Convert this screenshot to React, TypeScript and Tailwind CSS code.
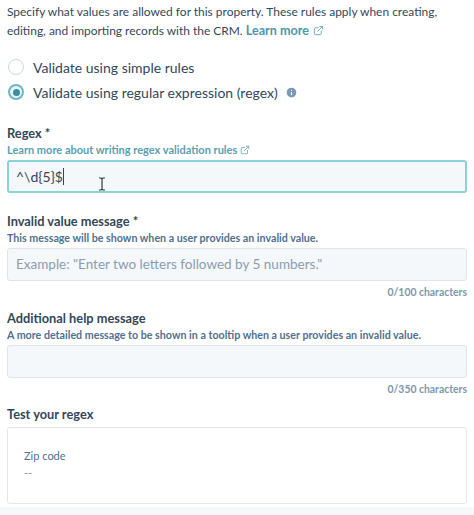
import { ExternalLink, Info } from "lucide-react";

const font = "font-['Lato',sans-serif]";

function FieldLabel({ text }: { text: string }) {
  return <div className="h-[20px] text-[12.8px] leading-[20px] font-bold text-[#33475b]">{text}</div>;
}

function HelpText({ text }: { text: string }) {
  return <div className="h-[16px] mt-[-1px] text-[10.7px] leading-[16px] font-bold text-[#516f90]">{text}</div>;
}

function Counter({ text }: { text: string }) {
  return <div className="mt-[3px] h-[16px] text-right text-[10.4px] leading-[16px] font-bold text-[#8296aa]">{text}</div>;
}

export default function App() {
  return (
    <div className={`${font} w-[474px] h-[515px] overflow-hidden bg-white px-[7px] text-[#33475b]`}>
      {/* Intro */}
      <div className="pt-[2px] text-[11.96px] leading-[19px] text-[#33475b] whitespace-nowrap">
        <p>Specify what values are allowed for this property. These rules apply when creating,</p>
        <p>
          editing, and importing records with the CRM.{" "}
          <span className="text-[12.6px] font-bold text-[#4f97a8]">Learn more</span>
          <ExternalLink className="inline ml-[4px] mb-[2px] w-[11px] h-[11px] text-[#6aa5b5]" />
        </p>
      </div>

      {/* Radios */}
      <div className="mt-[19px] flex flex-col gap-[9px] pl-[1px]">
        <label className="flex items-center h-[16px] gap-[9px] text-[14px]">
          <span className="w-[16px] h-[16px] rounded-full border border-[#cbd6e2] bg-white" />
          <span>Validate using simple rules</span>
        </label>
        <label className="flex items-center h-[16px] gap-[9px] text-[14px]">
          <span className="w-[16px] h-[16px] rounded-full border-2 border-[#6fb6c6] bg-[#e5f5f8] flex items-center justify-center">
            <span className="w-[7px] h-[7px] rounded-full bg-[#3f8ba0]" />
          </span>
          <span>Validate using regular expression (regex)</span>
          <Info className="ml-[-2px] w-[13px] h-[13px] fill-[#7c98b6] text-white" />
        </label>
      </div>

      {/* Regex */}
      <div className="mt-[23px]">
        <FieldLabel text="Regex *" />
        <div className="flex items-center h-[16px] mt-[-1px] text-[11px] leading-[16px] font-bold text-[#5a9fb0]">
          Learn more about writing regex validation rules
          <ExternalLink className="ml-[3px] w-[10px] h-[10px] text-[#6aa5b5]" />
        </div>
        <div className="relative mt-[2px] flex items-center h-[33px] rounded-[3px] border-2 border-[#86d3d8] bg-[#f5f8fa] pl-[7px] text-[14px] text-[#33475b]">
          ^\d{"{5}"}$<span className="w-px h-[17px] bg-[#33475b]" />
          {/* text cursor */}
          <svg className="absolute left-[89px] top-[15px]" width="8" height="14" viewBox="0 0 8 14" fill="none" stroke="#2d3e50" strokeWidth="1.2">
            <path d="M1 1h2l1 1 1-1h2M4 2v10M1 13h2l1-1 1 1h2" />
          </svg>
        </div>
      </div>

      {/* Invalid value message */}
      <div className="mt-[18px]">
        <FieldLabel text="Invalid value message *" />
        <HelpText text="This message will be shown when a user provides an invalid value." />
        <div className="mt-[2px] flex items-center h-[33px] rounded-[3px] border border-[#dfe3eb] bg-[#f5f8fa] pl-[8px] text-[13.5px] text-[#8b9cad]">
          Example: "Enter two letters followed by 5 numbers."
        </div>
        <Counter text="0/100 characters" />
      </div>

      {/* Additional help */}
      <div className="mt-[8px]">
        <FieldLabel text="Additional help message" />
        <HelpText text="A more detailed message to be shown in a tooltip when a user provides an invalid value." />
        <div className="mt-[2px] h-[33px] rounded-[3px] border border-[#dfe3eb] bg-[#f5f8fa]" />
        <Counter text="0/350 characters" />
      </div>

      {/* Test */}
      <div className="mt-[7px]">
        <FieldLabel text="Test your regex" />
        <div className="mt-[3px] h-[77px] rounded-[3px] border border-[#e2e7ee] bg-white pl-[16px] pt-[20px]">
          <div className="text-[11px] leading-[16px] text-[#516f90]">Zip code</div>
          <div className="mt-[1px] text-[11px] leading-[16px] text-[#7c98b6]">--</div>
        </div>
        <div className="-mx-[7px] mt-[3px] h-[12px] bg-[#f6f7f8]" />
      </div>
    </div>
  );
}
